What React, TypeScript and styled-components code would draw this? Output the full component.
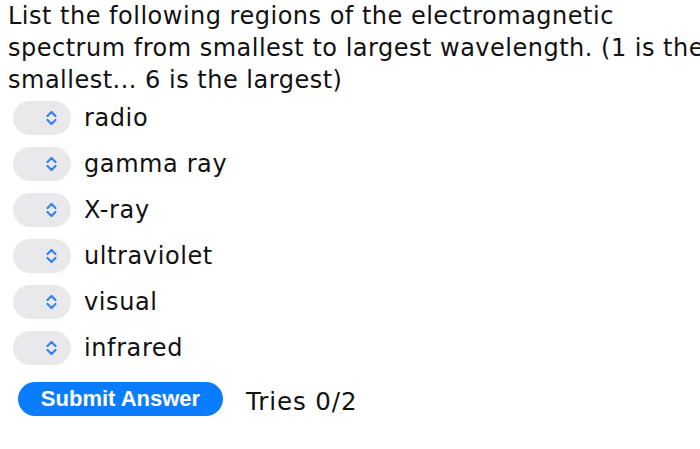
import styled, { createGlobalStyle } from 'styled-components';

const GlobalStyle = createGlobalStyle`
  html, body {
    margin: 0;
    padding: 0;
    background: #ffffff;
    overflow: hidden;
  }
  body {
    font-family: 'DejaVu Sans', Verdana, sans-serif;
    color: #111111;
  }
`;

const Page = styled.div`
  padding: 0 0 0 8px;
  width: 712px;
`;

const Question = styled.p`
  margin: 0;
  font-size: 24px;
  letter-spacing: 0.5px;
  line-height: 32px;
`;

const OptionList = styled.div`
  display: flex;
  flex-direction: column;
  gap: 12px;
  margin-top: 5px;
  padding-left: 5px;
`;

const OptionRow = styled.label`
  display: flex;
  align-items: center;
  gap: 13px;
  height: 34px;
`;

const SelectBox = styled.span`
  display: flex;
  align-items: center;
  justify-content: flex-end;
  width: 58px;
  height: 34px;
  padding-right: 14px;
  box-sizing: border-box;
  border-radius: 17px;
  background: #e9e9eb;
`;

const OptionLabel = styled.span`
  font-size: 24px;
  letter-spacing: 0.6px;
  line-height: 34px;
`;

const Actions = styled.div`
  display: flex;
  align-items: center;
  gap: 23px;
  margin-top: 16px;
  padding-left: 10px;
`;

const SubmitButton = styled.button`
  height: 34px;
  width: 205px;
  border: none;
  border-radius: 17px;
  background: #0a7cff;
  color: #ffffff;
  font-family: 'Liberation Sans', Arial, sans-serif;
  font-weight: 700;
  font-size: 22px;
  padding: 0;
`;

const Tries = styled.span`
  font-size: 24.5px;
  letter-spacing: 0.9px;
  margin-top: 6px;
`;

const Chevrons = () => (
  <svg width="11" height="16" viewBox="0 0 11 16" fill="none">
    <path
      d="M1.5 6 L5.5 2 L9.5 6 M1.5 10 L5.5 14 L9.5 10"
      stroke="#3484e8"
      strokeWidth="2.2"
      strokeLinecap="round"
      strokeLinejoin="round"
    />
  </svg>
);

const options = ['radio', 'gamma ray', 'X-ray', 'ultraviolet', 'visual', 'infrared'];

export default function App() {
  return (
    <>
      <GlobalStyle />
      <Page>
        <Question>
          List the following regions of the electromagnetic spectrum from smallest to largest
          wavelength. (1 is the smallest... 6 is the largest)
        </Question>
        <OptionList>
          {options.map((opt) => (
            <OptionRow key={opt}>
              <SelectBox>
                <Chevrons />
              </SelectBox>
              <OptionLabel>{opt}</OptionLabel>
            </OptionRow>
          ))}
        </OptionList>
        <Actions>
          <SubmitButton>Submit Answer</SubmitButton>
          <Tries>Tries 0/2</Tries>
        </Actions>
      </Page>
    </>
  );
}
